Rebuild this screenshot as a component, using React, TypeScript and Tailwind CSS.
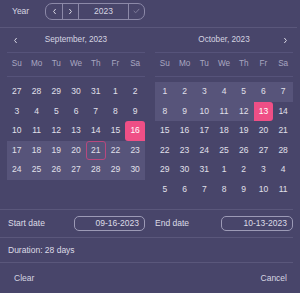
const font = { fontFamily: '"Liberation Sans", Arial, sans-serif' }

function Chevron({ dir }: { dir: 'left' | 'right' }) {
  return (
    <svg width="5" height="7" viewBox="0 0 5 7" fill="none">
      <polyline
        points={dir === 'left' ? '3.4,1.3 1.6,3.5 3.4,5.7' : '1.6,1.3 3.4,3.5 1.6,5.7'}
        stroke="currentColor"
        strokeWidth="1"
        strokeLinecap="round"
        strokeLinejoin="round"
      />
    </svg>
  )
}

const weekdays = ['Su', 'Mo', 'Tu', 'We', 'Th', 'Fr', 'Sa']

type Cell = { day: number; kind?: 'start' | 'end' | 'range'; outlined?: boolean }

const sep: Cell[] = [27, 28, 29, 30, 31, 1, 2, 3, 4, 5, 6, 7, 8, 9, 10, 11, 12, 13, 14, 15, 16, 17, 18, 19, 20, 21, 22, 23, 24, 25, 26, 27, 28, 29, 30].map(
  (day, i) => ({
    day,
    kind: i === 20 ? 'start' : i > 20 ? 'range' : undefined,
    outlined: i === 25,
  })
)

const oct: Cell[] = [
  ...Array.from({ length: 31 }, (_, i) => i + 1),
  ...Array.from({ length: 11 }, (_, i) => i + 1),
].map((day, i) => ({
  day,
  kind: i === 12 ? 'end' : i < 12 ? 'range' : undefined,
}))

function DayCell({ cell }: { cell: Cell }) {
  let cls = 'h-[19.5px] flex items-center justify-center'
  if (cell.kind === 'range') cls += ' bg-[#57547a]'
  if (cell.kind === 'start') cls += ' bg-[#ef4f86] text-white rounded-l-[3px] rounded-tr-[3px]'
  if (cell.kind === 'end') cls += ' bg-[#ef4f86] text-white rounded-r-[3px]'
  return (
    <div className={cls}>
      {cell.outlined ? (
        <div className="w-full h-full border border-[#b8487e] rounded-[3px] flex items-center justify-center">
          {cell.day}
        </div>
      ) : (
        cell.day
      )}
    </div>
  )
}

function Month({ title, cells, side }: { title: string; cells: Cell[]; side: 'left' | 'right' }) {
  return (
    <div className="w-[138px] shrink-0">
      <div className="h-[25px] flex items-center border-b border-[#56537a]">
        <div className="w-[16px] flex justify-center text-[#d8d7e4]">
          {side === 'left' && <Chevron dir="left" />}
        </div>
        <div className="flex-1 text-center text-[8.2px] text-[#d5d4e1]">{title}</div>
        <div className="w-[16px] flex justify-center text-[#d8d7e4]">
          {side === 'right' && <Chevron dir="right" />}
        </div>
      </div>
      <div className="grid grid-cols-7 h-[24px] items-center border-b border-[#56537a] text-[8.2px] text-[#a9a7c1]">
        {weekdays.map((w) => (
          <div key={w} className="text-center">
            {w}
          </div>
        ))}
      </div>
      <div className="grid grid-cols-7 pt-[5px] text-[8.5px] text-[#e1e0ea]">
        {cells.map((c, i) => (
          <DayCell key={i} cell={c} />
        ))}
      </div>
    </div>
  )
}

export default function App() {
  return (
    <div className="w-[300px] h-[293px] overflow-hidden bg-[#48456a] text-[#dddce7]" style={font}>
      <div className="h-[28px] flex items-center pb-[5px] border-b border-[#5a577b] mr-[3px]">
        <div className="w-[45px] pl-[12px] text-[8.5px] text-[#d6d5e1]">Year</div>
        <div className="flex h-[17px] w-[100px] border border-[#8c89a8] rounded-[7px] text-[#d6d5e1]">
          <div className="w-[17px] flex items-center justify-center border-r border-[#8c89a8]">
            <Chevron dir="left" />
          </div>
          <div className="w-[16px] flex items-center justify-center border-r border-[#8c89a8]">
            <Chevron dir="right" />
          </div>
          <div className="w-[50px] flex items-center justify-center border-r border-[#8c89a8] text-[8.5px]">
            2023
          </div>
          <div className="flex-1 flex items-center justify-center text-[#7f7c9a]">
            <svg width="7" height="6" viewBox="0 0 7 6" fill="none">
              <polyline points="1,3.2 2.7,4.8 6,1.2" stroke="currentColor" strokeWidth="1" strokeLinecap="round" strokeLinejoin="round" />
            </svg>
          </div>
        </div>
      </div>

      <div className="flex gap-[10px] pl-[7px] h-[182px] border-b border-[#5a577b] mr-[7px]">
        <Month title="September, 2023" cells={sep} side="left" />
        <Month title="October, 2023" cells={oct} side="right" />
      </div>

      <div className="mr-[7px] text-[8.5px]">
        <div className="h-[28px] flex items-center border-b border-[#5a577b] pl-[8px]">
          <div className="w-[137px] flex items-center justify-between">
            <span>Start date</span>
            <div className="w-[71px] h-[15px] border border-[#9c9ab6] rounded-[5px] flex items-center justify-end pr-[5px]">
              09-16-2023
            </div>
          </div>
          <div className="ml-[10px] w-[138px] flex items-center justify-between">
            <span>End date</span>
            <div className="w-[72px] h-[15px] border border-[#9c9ab6] rounded-[5px] flex items-center justify-end pr-[5px]">
              10-13-2023
            </div>
          </div>
        </div>
        <div className="h-[25px] flex items-center pl-[8px] border-b border-[#5a577b]">Duration: 28 days</div>
        <div className="h-[30px] flex items-center justify-between pl-[14px] pr-[6px]">
          <button className="text-[#d6d5e1]">Clear</button>
          <button className="text-[#d6d5e1]">Cancel</button>
        </div>
      </div>
    </div>
  )
}
